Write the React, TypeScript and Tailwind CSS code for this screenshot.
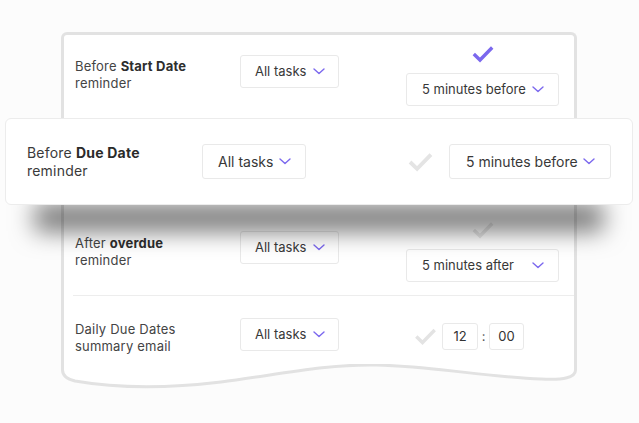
import React from "react";

const font = { fontFamily: "Inter, 'Noto Sans', sans-serif" };

function Chevron() {
  return (
    <svg width="12" height="7" viewBox="0 0 12 7" fill="none" className="shrink-0">
      <polyline points="1,1 6,5.5 11,1" stroke="#7b68ee" strokeWidth="1.4" strokeLinejoin="round" strokeLinecap="round" />
    </svg>
  );
}

function Check(props: { color: string; w: number; h: number; stroke?: number }) {
  return (
    <svg width={props.w} height={props.h} viewBox="0 0 22 17" fill="none" className="shrink-0">
      <polyline
        points="1.8,8.5 8,14.5 20.2,2"
        stroke={props.color}
        strokeWidth={props.stroke ?? 3.4}
        strokeLinejoin="miter"
      />
    </svg>
  );
}

function Select(props: { label: string; className?: string; text?: string }) {
  return (
    <div
      className={
        "flex items-center justify-between rounded-[3px] border border-[#e9e9e9] bg-white text-[#383838] " +
        (props.className ?? "")
      }
    >
      <span className={props.text ?? "text-[13px]"}>{props.label}</span>
      <Chevron />
    </div>
  );
}

function BackLabel(props: { children: React.ReactNode }) {
  return (
    <div className="w-[165px] shrink-0 text-[13px] leading-[17px] tracking-[0.2px] text-[#444]">{props.children}</div>
  );
}

export default function App() {
  return (
    <div className="h-[423px] w-[639px] overflow-hidden bg-[#fcfcfc] pl-[61px] pt-[32px]" style={font}>
      <div className="w-[516px]">
        <div className="rounded-t-[6px] border-[3px] border-b-0 border-[#e2e2e2] bg-white">
          {/* row 1 */}
          <div className="flex items-start pl-[11px] pr-[15px] pt-[10px] pb-[12px]">
            <div className="mt-[13px]">
              <BackLabel>
                Before <b className="font-bold text-[#2e2e2e]">Start Date</b>
                <br />
                reminder
              </BackLabel>
            </div>
            <div className="mt-[10px] w-[166px] shrink-0">
              <Select label="All tasks" className="h-[33px] w-[99px] pl-[14px] pr-[13px]" />
            </div>
            <div className="flex w-[153px] flex-col items-center">
              <Check color="#7b68ee" w={22} h={18} />
              <Select label="5 minutes before" className="mt-[10px] h-[33px] w-[153px] pl-[15px] pr-[14px]" />
            </div>
          </div>

          {/* highlighted row */}
          <div className="relative z-10 mx-[-59px] flex h-[87px] items-center rounded-[6px] border border-[#ececec] bg-white pl-[21px] pr-[21px] shadow-[0_56px_24px_-30px_rgba(0,0,0,0.55)]">
            <div className="w-[175px] shrink-0 text-[14px] leading-[18px] tracking-[0.2px] text-[#3a3a3a]">
              Before <b className="font-bold text-[#2a2a2a]">Due Date</b>
              <br />
              reminder
            </div>
            <Select label="All tasks" text="text-[14px]" className="h-[35px] w-[104px] pl-[15px] pr-[14px]" />
            <div className="ml-auto flex items-center gap-[16px]">
              <Check color="#e4e4e4" w={25} h={20} />
              <Select label="5 minutes before" text="text-[14px]" className="h-[35px] w-[162px] pl-[16px] pr-[15px]" />
            </div>
          </div>

          {/* row 3 */}
          <div className="flex items-start pl-[11px] pr-[15px] pt-[16px] pb-[13px]">
            <div className="mt-[14px]">
              <BackLabel>
                After <b className="font-bold text-[#2e2e2e]">overdue</b>
                <br />
                reminder
              </BackLabel>
            </div>
            <div className="mt-[10px] w-[166px] shrink-0">
              <Select label="All tasks" className="h-[33px] w-[99px] pl-[14px] pr-[13px]" />
            </div>
            <div className="flex w-[153px] flex-col items-center">
              <Check color="#e8e8e8" w={22} h={18} />
              <Select label="5 minutes after" className="mt-[10px] h-[33px] w-[153px] pl-[15px] pr-[14px]" />
            </div>
          </div>

          <div className="ml-[9px] h-px bg-[#ededed]" />

          {/* row 4 */}
          <div className="flex h-[68px] items-start pl-[11px] pr-[15px] pt-[22px]">
            <div className="mt-[3px]">
              <BackLabel>
                Daily Due Dates
                <br />
                summary email
              </BackLabel>
            </div>
            <div className="w-[166px] shrink-0">
              <Select label="All tasks" className="h-[33px] w-[99px] pl-[14px] pr-[13px]" />
            </div>
            <div className="mt-[5px] flex items-center pl-[8px]">
              <Check color="#e3e3e3" w={23} h={17} />
              <div className="ml-[5px] flex h-[27px] w-[36px] items-center justify-center rounded-[3px] border border-[#e9e9e9] text-[13px] text-[#333]">
                12
              </div>
              <span className="w-[11px] text-center text-[13px] text-[#555]">:</span>
              <div className="flex h-[27px] w-[35px] items-center justify-center rounded-[3px] border border-[#e9e9e9] text-[13px] text-[#333]">
                00
              </div>
            </div>
          </div>
        </div>
        <svg width="516" height="30" viewBox="0 0 516 30" fill="none" className="block">
          <path
            d="M1.5 0 L1.5 6 Q1.5 14 14 17 C 60 25 110 24 160 18 C 215 11 265 0 315 1 C 370 2 425 13 480 15 Q 514.5 17 514.5 6 L514.5 0 Z"
            fill="white"
          />
          <path
            d="M1.5 0 L1.5 6 Q1.5 14 14 17 C 60 25 110 24 160 18 C 215 11 265 0 315 1 C 370 2 425 13 480 15 Q 514.5 17 514.5 6 L514.5 0"
            stroke="#e2e2e2"
            strokeWidth="3"
          />
        </svg>
      </div>
    </div>
  );
}
